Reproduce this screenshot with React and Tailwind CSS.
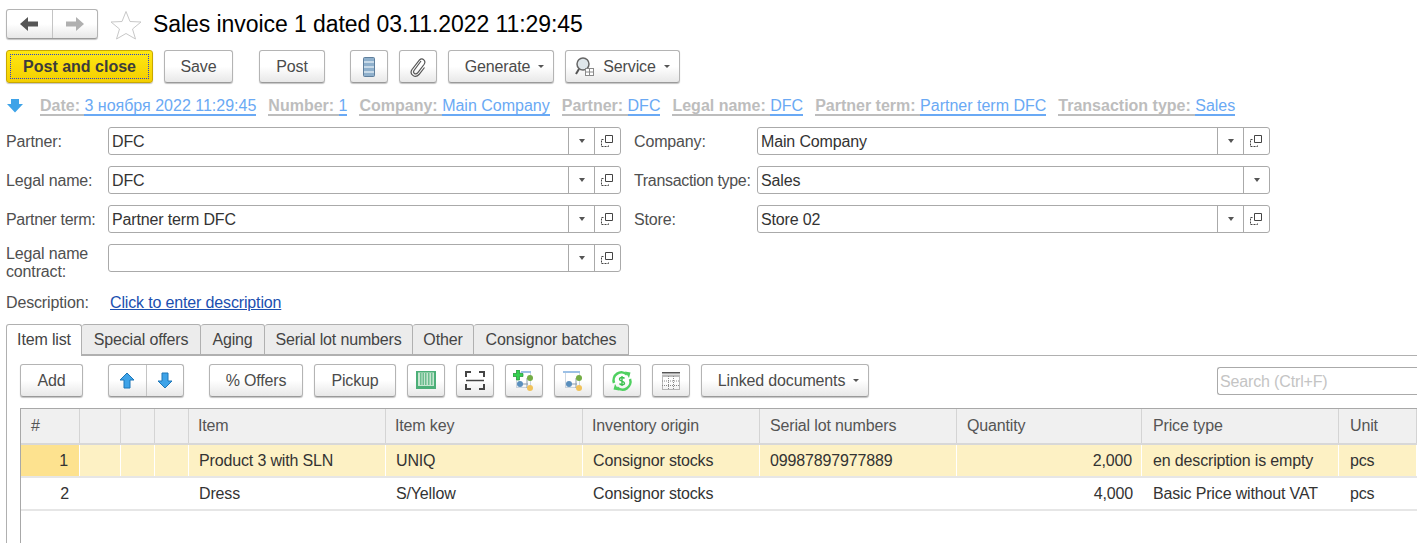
import React from "react";

const btn = "shrink-0 flex items-center justify-center rounded-[3px] border border-[#b4b4b4] border-b-[#9a9a9a] bg-gradient-to-b from-white via-white to-[#e8e8e8] shadow-[0_1px_1px_#c4c4c4] text-[#4b4b4b]";
const link = "text-[#6aa9f4] border-b-2 border-[#6aa9f4] leading-[17px]";
const muted = "text-[#bdbdbd] font-bold border-b-2 border-[#bdbdbd] leading-[17px] flex";

const columns = [
  { title: "#", w: "w-[59px]", pl: "pl-[10px]" },
  { title: "", w: "w-[41px]", pl: "pl-[9px]" },
  { title: "", w: "w-[34px]", pl: "pl-[9px]" },
  { title: "", w: "w-[34px]", pl: "pl-[9px]" },
  { title: "Item", w: "w-[197px]", pl: "pl-[9px]" },
  { title: "Item key", w: "w-[197px]", pl: "pl-[9px]" },
  { title: "Inventory origin", w: "w-[177px]", pl: "pl-[9px]" },
  { title: "Serial lot numbers", w: "w-[197px]", pl: "pl-[10px]" },
  { title: "Quantity", w: "w-[185px]", pl: "pl-[10px]" },
  { title: "Price type", w: "w-[197px]", pl: "pl-[11px]" },
  { title: "Unit", w: "w-[78px]", pl: "pl-[11px]" },
];

const rows = [
  ["1", "", "", "", "Product 3 with SLN", "UNIQ", "Consignor stocks", "09987897977889", "2,000", "en description is empty", "pcs"],
  ["2", "", "", "", "Dress", "S/Yellow", "Consignor stocks", "", "4,000", "Basic Price without VAT", "pcs"],
];

function Caret() {
  return <span className="ml-[8px] inline-block border-x-[3px] border-t-[3px] border-x-transparent border-t-[#555]" />;
}

function Arrow({ up, className }) {
  return (
    <svg width="16" height="17" viewBox="0 0 16 17" className={className}>
      <path
        d={up ? "M8 1 15 8H11V16H5V8H1Z" : "M5 1H11V9H15L8 16 1 9H5Z"}
        fill="#3ea3e8"
        stroke="#1c76b8"
        strokeWidth="1"
      />
    </svg>
  );
}

function Field({ label, value, width = "w-[513px]", labelWidth = "w-[102px]", open = true }) {
  return (
    <div className="flex items-center h-[28px]">
      <div className={`${labelWidth} shrink-0 mt-[2px] text-[#4f4f4f] leading-[18px]`}>{label}</div>
      <div className={`${width} h-[28px] flex rounded-[3px] border border-[#aaa] bg-white`}>
        <div className="flex-1 pl-[3px] leading-[28px] text-[#333]">{value}</div>
        <div className="w-[26px] border-l border-[#aaa] flex items-center justify-center">
          <span className="border-x-[3.5px] border-t-[4px] border-x-transparent border-t-[#555]" />
        </div>
        {open && (
          <div className="w-[26px] border-l border-[#aaa] flex items-center justify-center pr-[2px]">
            <svg width="12" height="12" viewBox="0 0 12 12" fill="none" stroke="#444">
              <path d="M4.500.5h7v7h-7z" />
              <path d="M2.500 4.500h-2v7h7v-2" strokeDasharray="2 1" />
            </svg>
          </div>
        )}
      </div>
    </div>
  );
}

function Barcode() {
  return (
    <svg width="20" height="19" viewBox="0 0 20 19">
      <rect x="0" y="0" width="20" height="18" fill="#c6e6d0" />
      <rect x="0" y="15" width="20" height="3" fill="#4caf78" />
      <rect x="0" y="0" width="20" height="1.500" fill="#4caf78" />
      <rect x="0" y="1" width="2" height="15" fill="#4caf78" />
      <rect x="18" y="1" width="2" height="15" fill="#4caf78" />
      {[4, 6.500, 9, 12, 15].map((x) => (
        <rect key={x} x={x} y="2" width="1.500" height="12" fill="#6cbd8f" />
      ))}
    </svg>
  );
}

function Scan() {
  return (
    <svg width="20" height="19" viewBox="0 0 20 19" fill="none" stroke="#444" strokeWidth="2">
      <path d="M1 6V1H6M14 1H19V6M1 13V18H6M14 18H19V13" />
      <path d="M1 9.500H19" strokeWidth="1.500" />
    </svg>
  );
}

function Flow({ plus }) {
  return (
    <svg width="22" height="22" viewBox="0 0 22 22" fill="none">
      <rect x="3.500" y="2.500" width="14" height="15" stroke="#9fb0c2" strokeDasharray="1 1" />
      <rect x={plus ? 8 : 1} y="1" width={plus ? 10 : 17} height="2" fill="#9cc0e6" />
      <path d="M8 14H15M14 8V18" stroke="#8a9bac" />
      <circle cx="7" cy="14" r="3" fill="#5a8fbd" />
      <circle cx="17" cy="8" r="3" fill="#74ad45" />
      <circle cx="17" cy="18" r="3" fill="#f0c25a" />
      {plus && (
        <path d="M3.500 0H6.500V3.500H10V6.500H6.500V10H3.500V6.500H0V3.500H3.500Z" fill="#35d04f" stroke="#1f8f36" strokeWidth="0.700" />
      )}
    </svg>
  );
}

function Money() {
  return (
    <svg width="22" height="22" viewBox="0 0 22 22" fill="none">
      <path d="M3 13A8 8 0 0 1 16 4.500" stroke="#4fd060" strokeWidth="2.500" />
      <path d="M19 9A8 8 0 0 1 6 17.500" stroke="#4fd060" strokeWidth="2.500" />
      <path d="M14 1.500 19.500 2.500 18 8Z M8 20.500 2.500 19.500 4 14Z" fill="#4fd060" />
      <path d="M13.500 8.500C12.500 7 8.500 7 8.500 9.200S13.500 11 13.500 13.200 9.500 15 8.500 13.500M11 6V16" stroke="#3cc04f" strokeWidth="1.400" />
    </svg>
  );
}

function GridIcon() {
  return (
    <svg width="20" height="20" viewBox="0 0 20 20" fill="none">
      <rect x="1" y="1" width="18" height="1.500" fill="#555" />
      <rect x="1" y="3.500" width="18" height="1.500" fill="#bbb" />
      <rect x="1.500" y="5.500" width="17" height="13" stroke="#777" strokeDasharray="1 1" />
      <path d="M7.500 5V19M12.500 5V19M1 10H19M1 14.500H19" stroke="#888" strokeDasharray="1 1" />
    </svg>
  );
}

export default function App() {
  return (
    <div className="w-[1417px] h-[543px] overflow-hidden bg-white text-[16px] tracking-[-0.15px] font-['Liberation_Sans',Arial,sans-serif] text-[#333]">
      {/* header */}
      <div className="flex items-center pl-[6px] pt-[9px] h-[39px]">
        <div className={`${btn} w-[92px] h-[30px]`}>
          <div className="flex-1 h-full flex items-center justify-center border-r border-[#c4c4c4]">
            <svg width="18" height="14" viewBox="0 0 18 14"><path d="M0 7 8 0V4.500H18V9.500H8V14Z" fill="#555" /></svg>
          </div>
          <div className="flex-1 h-full flex items-center justify-center">
            <svg width="18" height="14" viewBox="0 0 18 14"><path d="M18 7 10 0V4.500H0V9.500H10V14Z" fill="#b0b0b0" /></svg>
          </div>
        </div>
        <svg width="32" height="30" viewBox="0 0 32 30" className="ml-[12px] mt-[1px]" fill="#fff" stroke="#c8c8c8">
          <path d="M16 1.500 20 11.500 31 12 22.500 19 25.500 29 16 23.500 6.500 29 9.500 19 1 12 12 11.500Z" />
        </svg>
        <h1 className="ml-[11px] text-[23px] tracking-[-0.07px] leading-[30px] text-black whitespace-nowrap">Sales invoice 1 dated 03.11.2022 11:29:45</h1>
      </div>

      {/* command bar */}
      <div className="flex items-center pl-[6px] mt-[11px] h-[33px]">
        <div className="flex items-center justify-center w-[147px] h-[33px] rounded-[3px] border border-[#c9a800] bg-gradient-to-b from-[#ffe812] to-[#f4cf00] shadow-[0_1px_1px_#c4c4c4]">
          <div className="w-[139px] h-[25px] border border-dotted border-[#2b3fd0] text-center font-bold tracking-normal text-[#3c3c3c] leading-[23px]">Post and close</div>
        </div>
        <button className={`${btn} ml-[11px] w-[69px] h-[33px]`}>Save</button>
        <button className={`${btn} ml-[26px] w-[66px] h-[33px]`}>Post</button>
        <button className={`${btn} ml-[25px] w-[38px] h-[33px]`}>
          <svg width="12" height="20" viewBox="0 0 12 20">
            <rect x="0.500" y="0.500" width="11" height="19" rx="1" fill="#8fb0cc" stroke="#5f7f9c" />
            <path d="M1 5H11M1 10H11M1 15H11" stroke="#dbe7f1" strokeWidth="1.500" />
          </svg>
        </button>
        <button className={`${btn} ml-[11px] w-[38px] h-[33px]`}>
          <svg width="18" height="22" viewBox="0 0 18 22" fill="none" stroke="#555" strokeWidth="1.200">
            <path d="M12 5 5 14.500C3.500 17 6.500 19 8.500 17L15 8.500C17.500 5 13.500 1 10.500 4L3 13.500C0 18 6 23 10 18.500L15.500 11.500" />
          </svg>
        </button>
        <button className={`${btn} ml-[11px] w-[106px] h-[33px] pl-[7px]`}>Generate<Caret /></button>
        <button className={`${btn} ml-[11px] w-[115px] h-[33px]`}>
          <svg width="20" height="20" viewBox="0 0 20 20" fill="none" className="mr-[8px]">
            <circle cx="8" cy="7" r="6" fill="#dfe6ea" stroke="#666" strokeWidth="1.500" />
            <path d="M4 12 1 17" stroke="#555" strokeWidth="2" />
            <rect x="10.500" y="11.500" width="8" height="7" fill="#fff" stroke="#8a8a8a" />
            <path d="M14.500 11.500V18.500M10.500 15H18.500" stroke="#8a8a8a" />
          </svg>
          Service<Caret />
        </button>
      </div>

      {/* summary */}
      <div className="flex items-start pl-[7px] mt-[14px] h-[18px] whitespace-nowrap tracking-normal">
        <svg width="16" height="15" viewBox="0 0 16 15" className="mt-[1px]">
          <path d="M4 1H12V6H16L8 14.500 0 6H4Z" fill="#3ea3e8" />
        </svg>
        <div className="flex ml-[17px] gap-[12px] leading-[17px]">
          <div className={muted}>Date:&nbsp;<span className={`${link} font-normal mb-[-2px]`}>3 ноября 2022 11:29:45</span></div>
          <div className={muted}>Number:&nbsp;<span className={`${link} font-normal mb-[-2px]`}>1</span></div>
          <div className={muted}>Company:&nbsp;<span className={`${link} font-normal mb-[-2px]`}>Main Company</span></div>
          <div className={muted}>Partner:&nbsp;<span className={`${link} font-normal mb-[-2px]`}>DFC</span></div>
          <div className={muted}>Legal name:&nbsp;<span className={`${link} font-normal mb-[-2px]`}>DFC</span></div>
          <div className={muted}>Partner term:&nbsp;<span className={`${link} font-normal mb-[-2px]`}>Partner term DFC</span></div>
          <div className={muted}>Transaction type:&nbsp;<span className={`${link} font-normal mb-[-2px]`}>Sales</span></div>
        </div>
      </div>

      {/* form */}
      <div className="flex pl-[6px] mt-[12px]">
        <div className="flex flex-col gap-[11px] w-[628px]">
          <Field label="Partner:" value="DFC" />
          <Field label="Legal name:" value="DFC" />
          <Field label={<span className="tracking-[-0.3px]">Partner term:</span>} value="Partner term DFC" />
          <Field label={<span className="block pt-[8px]">Legal name<br />contract:</span>} value="" />
        </div>
        <div className="flex flex-col gap-[11px]">
          <Field label="Company:" value="Main Company" labelWidth="w-[123px]" />
          <Field label={<span className="tracking-[-0.33px]">Transaction type:</span>} value="Sales" labelWidth="w-[123px]" open={false} />
          <Field label="Store:" value="Store 02" labelWidth="w-[123px]" />
        </div>
      </div>

      <div className="flex pl-[6px] mt-[22px] h-[18px] leading-[18px]">
        <div className="w-[104px] text-[#4f4f4f]">Description:</div>
        <a className="text-[#1b4fb0] underline">Click to enter description</a>
      </div>

      {/* tabs */}
      <div className="flex pl-[6px] mt-[12px] h-[32px] relative z-10">
        <div className="w-[76px] h-[32px] rounded-t-[3px] border border-[#b0b0b0] border-b-0 bg-white text-center leading-[30px] text-[#444]">Item list</div>
        {[
          ["Special offers", "w-[119px]"],
          ["Aging", "w-[64px]"],
          ["Serial lot numbers", "w-[148px]"],
          ["Other", "w-[61px]"],
          ["Consignor batches", "w-[155px]"],
        ].map(([t, w]) => (
          <div key={t} className={`${w} h-[31px] rounded-t-[3px] border border-[#b0b0b0] border-l-0 bg-[#ececec] text-center leading-[29px] text-[#444]`}>{t}</div>
        ))}
      </div>

      {/* panel */}
      <div className="ml-[6px] mt-[-1px] border-l border-t border-[#b0b0b0] h-[200px] pl-[13px] pt-[8px]">
        <div className="flex items-center h-[33px]">
          <button className={`${btn} w-[63px] h-[33px]`}>Add</button>
          <div className={`${btn} ml-[25px] w-[76px] h-[33px]`}>
            <div className="flex-1 h-full flex items-center justify-center border-r border-[#c4c4c4]"><Arrow up /></div>
            <div className="flex-1 h-full flex items-center justify-center"><Arrow /></div>
          </div>
          <button className={`${btn} ml-[25px] w-[94px] h-[33px]`}>% Offers</button>
          <button className={`${btn} ml-[11px] w-[82px] h-[33px]`}>Pickup</button>
          <button className={`${btn} ml-[11px] w-[38px] h-[33px]`}><Barcode /></button>
          <button className={`${btn} ml-[11px] w-[38px] h-[33px]`}><Scan /></button>
          <button className={`${btn} ml-[11px] w-[38px] h-[33px]`}><Flow plus /></button>
          <button className={`${btn} ml-[11px] w-[38px] h-[33px]`}><Flow /></button>
          <button className={`${btn} ml-[11px] w-[38px] h-[33px]`}><Money /></button>
          <button className={`${btn} ml-[11px] w-[38px] h-[33px]`}><GridIcon /></button>
          <button className={`${btn} ml-[11px] w-[168px] h-[33px] pl-[7px]`}>Linked documents<Caret /></button>
          <div className="ml-[348px] mt-[1px] w-[210px] h-[28px] shrink-0 rounded-l-[3px] border border-[#aaa] border-r-0 pl-[2px] leading-[28px] text-[#c4c4c4]">Search (Ctrl+F)</div>
        </div>

        <div className="mt-[11px] border-l border-t border-[#a8a8a8] h-[150px]">
          <div className="flex h-[36px] border-b-2 border-[#d8d8d8]">
            {columns.map((c, i) => (
              <div key={i} className={`${c.w} ${c.pl} shrink-0 bg-[#f0f0f0] border-r border-[#d4d4d4] leading-[34px] text-[#555]`}>{c.title}</div>
            ))}
          </div>
          {rows.map((r, ri) => (
            <div key={ri} className={`flex h-[33px] border-b-2 border-[#e6e6e6] ${ri === 0 ? "bg-[#fdf1c4]" : "bg-white"}`}>
              {r.map((v, i) => (
                <div
                  key={i}
                  className={`${columns[i].w} shrink-0 leading-[31px] text-[#333] whitespace-nowrap ${ri === 0 ? "border-r border-white" : ""} ${ri === 0 && i === 0 ? "bg-[#fde28f]" : ""} ${i === 0 ? "text-right pr-[11px]" : i === 8 ? "text-right pr-[9px]" : i > 8 ? "pl-[11px]" : "pl-[10px]"}`}
                >
                  {v}
                </div>
              ))}
            </div>
          ))}
        </div>
      </div>
    </div>
  );
}
